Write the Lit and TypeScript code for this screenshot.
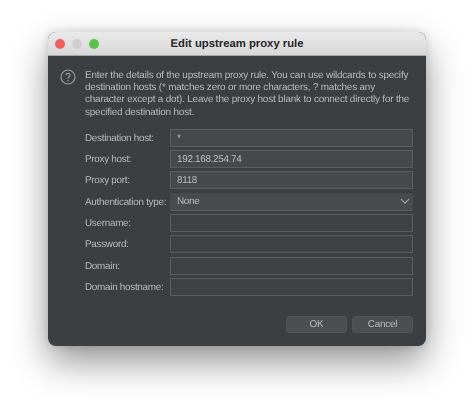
import { LitElement, html, css } from "lit";
import { customElement } from "lit/decorators.js";

const rows: [string, string][] = [
  ["Destination host:", "*"],
  ["Proxy host:", "192.168.254.74"],
  ["Proxy port:", "8118"],
  ["Authentication type:", "None"],
  ["Username:", ""],
  ["Password:", ""],
  ["Domain:", ""],
  ["Domain hostname:", ""],
];

@customElement("app-root")
export class AppRoot extends LitElement {
  static styles = css`
    :host {
      display: block;
      width: 474px;
      height: 409px;
      box-sizing: border-box;
      padding: 32px 48px 63px;
      background: #fff;
      font-family: "Liberation Sans", Arial, sans-serif;
      text-rendering: geometricPrecision;
      overflow: hidden;
    }
    .window {
      height: 314px;
      display: flex;
      flex-direction: column;
      border-radius: 8px;
      overflow: hidden;
      background: #3c3f41;
      box-shadow: 0 16px 36px rgba(0, 0, 0, 0.42), 0 0 10px rgba(0, 0, 0, 0.14);
      filter: blur(0.3px);
    }
    .titlebar {
      height: 24px;
      flex: none;
      box-sizing: border-box;
      display: grid;
      grid-template-columns: 1fr auto 1fr;
      align-items: center;
      padding: 0 7px;
      background: linear-gradient(#e9e9e9, #d8d8d8);
      border-bottom: 1px solid #a8a8a8;
    }
    .lights {
      display: flex;
      gap: 7px;
    }
    .light {
      width: 10px;
      height: 10px;
      border-radius: 50%;
    }
    .red { background: #ee5f59; }
    .gray { background: #cfcfcf; }
    .green { background: #5cc04f; }
    .title {
      font-size: 11.3px;
      font-weight: 700;
      color: #262626;
    }
    .body {
      flex: 1;
      display: flex;
      flex-direction: column;
      padding: 13px 13px 13px 12px;
      min-height: 0;
    }
    .intro {
      display: flex;
      gap: 9px;
      align-items: flex-start;
    }
    .help {
      flex: none;
      width: 16px;
      height: 16px;
      color: #9a9c9e;
    }
    .intro p {
      margin: 1px 0 0;
      font-size: 9.9px;
      letter-spacing: -0.17px;
      line-height: 12.2px;
      color: #b9bbbc;
      white-space: nowrap;
    }
    .form {
      display: grid;
      grid-template-columns: 85px 1fr;
      grid-auto-rows: 18px;
      row-gap: 3.3px;
      margin-top: 10px;
      padding-left: 25px;
      align-items: stretch;
    }
    .label {
      font-size: 9.9px;
      letter-spacing: -0.28px;
      color: #b9bbbc;
      display: flex;
      align-items: center;
      white-space: nowrap;
      padding-top: 1px;
    }
    .field {
      box-sizing: border-box;
      border: 1px solid #5b5e60;
      background: #45494a;
      font-size: 9.9px;
      letter-spacing: -0.3px;
      color: #bbbdbe;
      display: flex;
      align-items: center;
      padding: 1px 6px 0;
    }
    .field.empty {
      background: #3f4244;
    }
    .select {
      justify-content: space-between;
      background: #474b4c;
      border: none;
      border-bottom: 1px solid #5b5e60;
      border-radius: 2px;
      padding: 1px 3px 0 7px;
    }
    .select svg {
      width: 10px;
      height: 7px;
      color: #a8aaab;
    }
    .actions {
      margin-top: auto;
      display: flex;
      justify-content: flex-end;
      gap: 5px;
    }
    .btn {
      width: 61px;
      height: 17px;
      box-sizing: border-box;
      border-radius: 3px;
      background: #4b4f51;
      border: 1px solid #505456;
      color: #bbbdbe;
      font-size: 9.9px;
      letter-spacing: -0.2px;
      display: flex;
      align-items: center;
      justify-content: center;
    }
  `;

  render() {
    return html`
      <div class="window">
        <div class="titlebar">
          <div class="lights">
            <span class="light red"></span>
            <span class="light gray"></span>
            <span class="light green"></span>
          </div>
          <div class="title">Edit upstream proxy rule</div>
          <div></div>
        </div>
        <div class="body">
          <div class="intro">
            <svg class="help" viewBox="0 0 16 16" fill="none">
              <circle cx="8" cy="8" r="7" stroke="currentColor" stroke-width="1.2"></circle>
              <path d="M5.9 6.3c0-1.2 1-2 2.1-2s2.1.8 2.1 1.9c0 1.6-2.1 1.6-2.1 3.3" stroke="currentColor" stroke-width="1.2"></path>
              <circle cx="8" cy="11.6" r=".8" fill="currentColor"></circle>
            </svg>
            <p>Enter the details of the upstream proxy rule. You can use wildcards to specify<br />destination hosts (* matches zero or more characters, ? matches any<br />character except a dot). Leave the proxy host blank to connect directly for the<br />specified destination host.</p>
          </div>
          <div class="form">
            ${rows.map(([label, value]) => html`
              <div class="label">${label}</div>
              ${label.startsWith("Auth")
                ? html`<div class="field select"><span>${value}</span>
                    <svg viewBox="0 0 10 7" fill="none"><path d="M1 1.2 5 5.2 9 1.2" stroke="currentColor" stroke-width="1.1"></path></svg></div>`
                : html`<div class="field ${value ? "" : "empty"}">${value}</div>`}
            `)}
          </div>
          <div class="actions">
            <div class="btn">OK</div>
            <div class="btn">Cancel</div>
          </div>
        </div>
      </div>
    `;
  }
}
